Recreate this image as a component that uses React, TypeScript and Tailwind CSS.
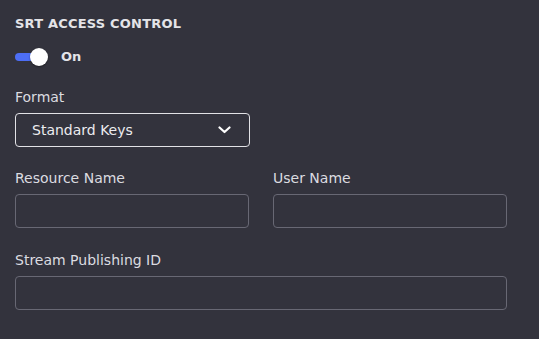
import { useState } from 'react';

function Field({ label }: { label: string }) {
  return (
    <div className="flex flex-col">
      <label className="text-[14px] leading-[20px] text-[#dcdce0]">{label}</label>
      <input
        type="text"
        className="mt-[6px] h-[34px] w-full rounded-[4px] border border-[#686874] bg-transparent px-3 text-[14px] text-white outline-none"
      />
    </div>
  );
}

export default function App() {
  const [enabled, setEnabled] = useState(true);

  return (
    <div
      className="min-h-screen w-full bg-[#33333d] pl-[15px] pt-[14px]"
      style={{ fontFamily: '"DejaVu Sans", sans-serif' }}
    >
      <div className="w-[492px]">
        {/* Header */}
        <h2 className="text-[13px] leading-[20px] font-bold tracking-[0.2px] text-[#e4e4e8]">
          SRT ACCESS CONTROL
        </h2>

        {/* Toggle */}
        <button
          onClick={() => setEnabled(!enabled)}
          className="mt-[14px] flex h-[18px] items-center gap-[13px]"
        >
          <span className="relative block h-[18px] w-[33px]">
            <span className="absolute left-0 top-[5px] h-[8px] w-[30px] rounded-full bg-[#4d6ef5]" />
            <span className="absolute left-[15px] top-0 h-[18px] w-[18px] rounded-full bg-white shadow-[0_1px_2px_rgba(0,0,0,0.4)]" />
          </span>
          <span className="text-[13px] font-bold text-[#e4e4e8]">{enabled ? 'On' : 'Off'}</span>
        </button>

        {/* Format */}
        <div className="mt-[21px] w-[235px]">
          <label className="block text-[14px] leading-[20px] text-[#dcdce0]">Format</label>
          <button className="mt-[6px] flex h-[34px] w-full items-center justify-between rounded-[4px] border border-[#e2e2e6] pl-[16px] pr-[18px]">
            <span className="text-[14px] text-[#ececef]">Standard Keys</span>
            <svg width="13" height="8" viewBox="0 0 13 8" fill="none">
              <path d="M1.5 1.5L6.5 6L11.5 1.5" stroke="white" strokeWidth="2.2" strokeLinecap="round" strokeLinejoin="round" />
            </svg>
          </button>
        </div>

        {/* Resource / User */}
        <div className="mt-[21px] grid grid-cols-2 gap-x-[24px]">
          <Field label="Resource Name" />
          <Field label="User Name" />
        </div>

        {/* Stream */}
        <div className="mt-[22px]">
          <Field label="Stream Publishing ID" />
        </div>
      </div>
    </div>
  );
}
